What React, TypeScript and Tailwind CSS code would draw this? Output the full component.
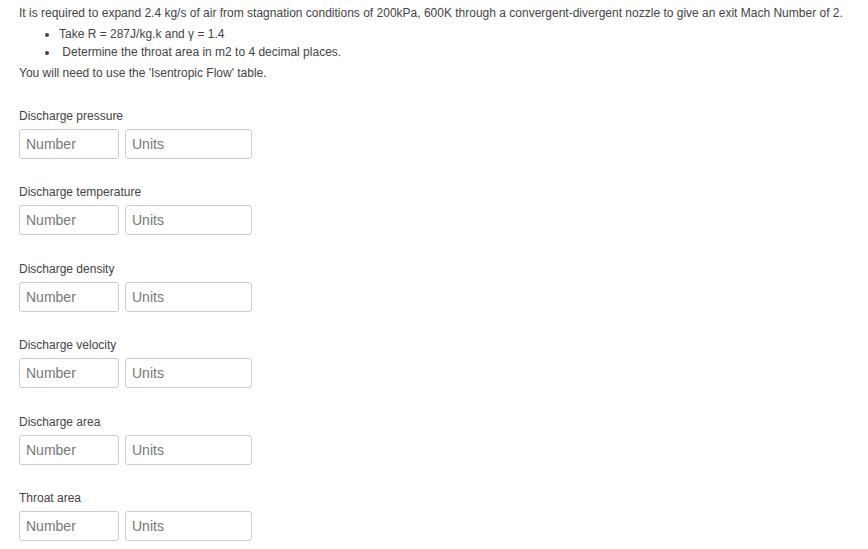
import React from "react";

const fields = [
  "Discharge pressure",
  "Discharge temperature",
  "Discharge density",
  "Discharge velocity",
  "Discharge area",
  "Throat area",
];

function AnswerRow({ label }: { label: string }) {
  return (
    <div className="flex flex-col">
      <label className="text-[12px] leading-[18px]">{label}</label>
      <div className="mt-[4px] flex gap-[6px]">
        <input
          type="text"
          placeholder="Number"
          className="h-[30px] w-[100px] rounded-[3px] border border-[#cccccc] bg-white px-[6px] text-[14px] text-[#333] placeholder-[#777] focus:outline-none"
        />
        <input
          type="text"
          placeholder="Units"
          className="h-[30px] w-[127px] rounded-[3px] border border-[#cccccc] bg-white px-[6px] text-[14px] text-[#333] placeholder-[#777] focus:outline-none"
        />
      </div>
    </div>
  );
}

export default function App() {
  return (
    <div
      className="min-h-screen bg-white px-[19px] pt-[4px] text-[12px] leading-[18px] text-[#444]"
      style={{ fontFamily: '"Liberation Sans", Arial, sans-serif' }}
    >
      <p>
        It is required to expand 2.4 kg/s of air from stagnation conditions of 200kPa, 600K through a
        convergent-divergent nozzle to give an exit Mach Number of 2.
      </p>
      <ul className="my-[3px] list-disc pl-[40px]">
        <li>Take R = 287J/kg.k and γ = 1.4</li>
        <li>&nbsp;Determine the throat area in m2 to 4 decimal places.</li>
      </ul>
      <p>You will need to use the 'Isentropic Flow' table.</p>

      <div className="mt-[25px] flex flex-col gap-[24.4px]">
        {fields.map((f) => (
          <AnswerRow key={f} label={f} />
        ))}
      </div>
    </div>
  );
}
